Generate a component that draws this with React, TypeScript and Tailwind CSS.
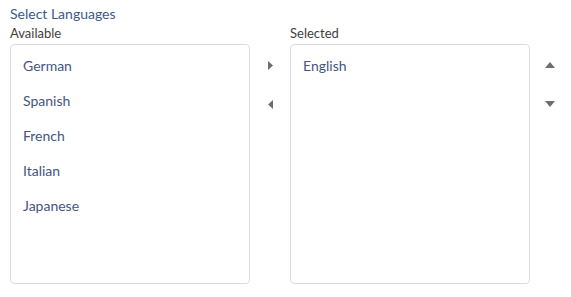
const available = ['German', 'Spanish', 'French', 'Italian', 'Japanese'];
const selected = ['English'];

function Caret({ dir }: { dir: 'left' | 'right' | 'up' | 'down' }) {
  const points = {
    right: '0,0 5,4.5 0,9',
    left: '5,0 0,4.5 5,9',
    up: '0,6 5,0 10,6',
    down: '0,0 10,0 5,6',
  }[dir];
  const horizontal = dir === 'left' || dir === 'right';
  return (
    <svg
      width={horizontal ? 5 : 10}
      height={horizontal ? 9 : 6}
      viewBox={horizontal ? '0 0 5 9' : '0 0 10 6'}
      className="fill-[#706e6b]"
    >
      <polygon points={points} />
    </svg>
  );
}

function ListBox({ label, items }: { label: string; items: string[] }) {
  return (
    <div className="w-[240px]">
      <div className="text-[13px] leading-[18px] text-[#3e3e3c]">{label}</div>
      <div className="mt-[2px] h-[240px] rounded-[4px] border border-[#dddbda] bg-white pt-[3px]">
        <ul>
          {items.map((item) => (
            <li
              key={item}
              className="flex h-[35px] items-center px-[12px] text-[14px] text-[#44567f]"
            >
              {item}
            </li>
          ))}
        </ul>
      </div>
    </div>
  );
}

function ButtonColumn({ first, second }: { first: 'right' | 'up'; second: 'left' | 'down' }) {
  return (
    <div className="flex w-[40px] flex-col items-center gap-[15px] pt-[29px]">
      <button className="flex h-[24px] w-[24px] items-center justify-center">
        <Caret dir={first} />
      </button>
      <button className="flex h-[24px] w-[24px] items-center justify-center">
        <Caret dir={second} />
      </button>
    </div>
  );
}

export default function App() {
  return (
    <div className="min-h-[297px] bg-white pl-[10px] pt-[4px] font-['Lato',_'Open_Sans',_sans-serif]">
      <div className="text-[14px] leading-[20px] text-[#3a5b8c]">Select Languages</div>
      <div className="flex">
        <ListBox label="Available" items={available} />
        <ButtonColumn first="right" second="left" />
        <ListBox label="Selected" items={selected} />
        <ButtonColumn first="up" second="down" />
      </div>
    </div>
  );
}
